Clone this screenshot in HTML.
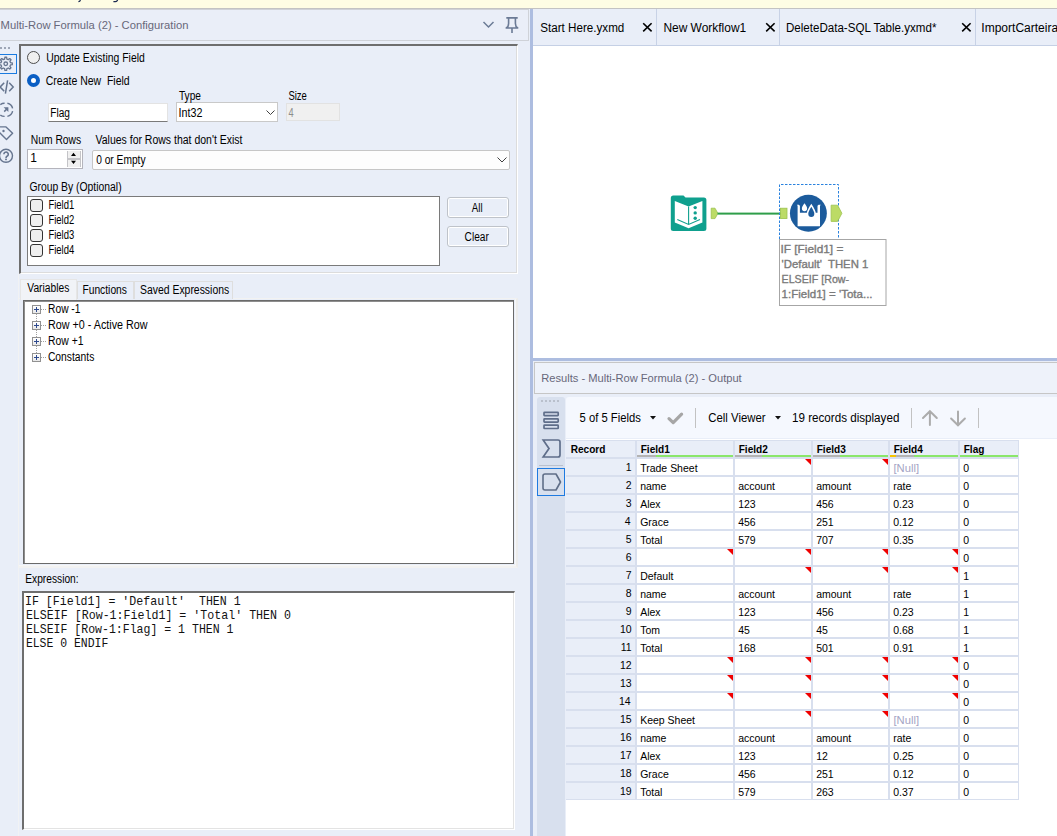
<!DOCTYPE html>
<html><head><meta charset="utf-8">
<style>
*{margin:0;padding:0;box-sizing:border-box}
html,body{width:1057px;height:836px;overflow:hidden;background:#e9eef8;font-family:"Liberation Sans",sans-serif;color:#000}
.a{position:absolute}
.t{position:absolute;white-space:nowrap;font-size:11px;line-height:13px}
svg{position:absolute;overflow:visible}
.tb{font-weight:bold;font-size:11px;line-height:14px}
.td{font-size:11.5px;line-height:14px}
.nul{color:#a3a3c0}
</style></head><body>
<!-- top yellow bar -->
<div class="a" style="left:0;top:0;width:1057px;height:8px;background:#fefde4"></div>
<div class="a" style="left:0;top:8px;width:1057px;height:1px;background:#c3c3c3"></div>
<svg style="left:0;top:0" width="200" height="8"><path d="M80.6 -1 Q80.4 1.6 78.4 1.6" fill="none" stroke="#1a2a50" stroke-width="1.2"/><path d="M117.6 -1 Q117.6 1.6 115.4 1.6 H113.4" fill="none" stroke="#1a2a50" stroke-width="1.2"/></svg>

<!-- LEFT CONFIG PANEL -->
<div class="a" style="left:0;top:9px;width:530px;height:827px;background:#e9eef8"></div>
<!-- header -->
<div class="a" style="left:-1px;top:9px;width:530px;height:32px;border:1px solid #cfd2d8;background:#eaeef8"></div>

<svg style="left:483px;top:21px" width="11" height="8"><path d="M0.5 1 L5.5 6 L10.5 1" fill="none" stroke="#6b7a95" stroke-width="1.5"/></svg>
<svg style="left:0;top:0" width="530" height="40"><path d="M506.3 17.9 H517.7 M508.6 18.2 V23.5 Q508.6 26.6 506.3 28 H517.7 Q515.4 26.6 515.4 23.5 V18.2 M512 28 V33" fill="none" stroke="#6b7a95" stroke-width="1.6" stroke-linejoin="round"/></svg>


<!-- left icon strip -->
<svg style="left:0;top:0" width="40" height="180">
  <g fill="#9ea6b6"><rect x="0" y="47" width="2" height="2"/><rect x="4" y="47" width="2" height="2"/><rect x="8" y="47" width="2" height="2"/></g>
  <rect x="-0.5" y="54.5" width="17" height="19" fill="none" stroke="#1a7be0" stroke-width="1"/>
  <path d="M10.51 62.66 L12.29 62.92 L12.29 64.68 L10.51 64.94 L9.93 66.36 L11.00 67.80 L9.75 69.05 L8.31 67.98 L6.89 68.56 L6.63 70.34 L4.87 70.34 L4.61 68.56 L3.19 67.98 L1.75 69.05 L0.50 67.80 L1.57 66.36 L0.99 64.94 L-0.79 64.68 L-0.79 62.92 L0.99 62.66 L1.57 61.24 L0.50 59.80 L1.75 58.55 L3.19 59.62 L4.61 59.04 L4.87 57.26 L6.63 57.26 L6.89 59.04 L8.31 59.62 L9.75 58.55 L11.00 59.80 L9.93 61.24 Z" fill="none" stroke="#66758f" stroke-width="1.3" stroke-linejoin="round"/>
  <circle cx="5.75" cy="63.8" r="1.8" fill="none" stroke="#66758f" stroke-width="1.3"/>
  <path d="M4.2 82.8 L0.2 87 L4.2 91.2 M9.2 82.8 L13.2 87 L9.2 91.2 M7.6 80.4 L5.4 93.6" fill="none" stroke="#66758f" stroke-width="1.5"/>
  <path d="M0.3 104.6 A6.6 6.6 0 0 1 4.6 103.2 M7.4 103.2 A6.6 6.6 0 0 1 12.6 108.4 M12.6 111.2 A6.6 6.6 0 0 1 7.4 116.4 M4.6 116.4 A6.6 6.6 0 0 1 0.3 115" fill="none" stroke="#66758f" stroke-width="1.4"/>
  <path d="M4.2 111.6 L7.6 108.2" stroke="#66758f" stroke-width="1.5"/>
  <path d="M3.6 107.2 H8.4 V112 Z" fill="#66758f"/>
  <path d="M-1 126.9 H6 L12.6 133.3 L6.5 139.4 L-1 132" fill="none" stroke="#66758f" stroke-width="1.4" stroke-linejoin="round"/>
  <circle cx="3.5" cy="131" r="1.2" fill="#66758f"/>
  <circle cx="6" cy="155.8" r="6.5" fill="none" stroke="#66758f" stroke-width="1.4"/>
  <path d="M3.9 154.2 A2.2 2.2 0 1 1 7.6 155.8 Q6 156.6 6 158" fill="none" stroke="#66758f" stroke-width="1.6"/>
  <rect x="5.1" y="158.6" width="1.8" height="1.6" fill="#66758f"/>
</svg>
<!-- config groupbox -->
<div class="a" style="left:19px;top:44px;width:499px;height:230px;border-top:2px solid #6e6e6e;border-left:2px solid #6e6e6e;border-right:1px solid #fff;border-bottom:1px solid #fff"></div>
<div class="a" style="left:21px;top:46px;width:496px;height:227px;border-right:1px solid #dcdcdc;border-bottom:1px solid #dcdcdc"></div>

<!-- radios -->
<div class="a" style="left:27px;top:51px;width:13px;height:13px;border-radius:50%;border:1px solid #4d4d4d;background:#f0f0f0"></div>

<div class="a" style="left:27px;top:74px;width:13px;height:13px;border-radius:50%;border:4px solid #0a5ec4;background:#fff"></div>


<!-- field row -->


<div class="a" style="left:48px;top:103px;width:120px;height:19px;background:#fff;border:1px solid #e3e3e3;border-bottom:1px solid #7a7a7a"></div>

<div class="a" style="left:176px;top:102px;width:102px;height:20px;background:#fff;border:1px solid #c9c9c9"></div>

<svg style="left:266px;top:110px" width="9" height="6"><path d="M0.5 0.5 L4.5 4.5 L8.5 0.5" fill="none" stroke="#404040" stroke-width="1"/></svg>
<div class="a" style="left:286px;top:103px;width:54px;height:18px;background:#f0f0f0;border:1px solid #e2e2e2"></div>


<!-- num rows -->


<div class="a" style="left:27px;top:149px;width:56px;height:20px;background:#fff;border:1px solid #b4b4bc"></div>

<div class="a" style="left:67px;top:151px;width:14px;height:16px;background:#c4c4c8"></div><div class="a" style="left:68px;top:151px;width:12px;height:7px;background:#f0f0f0"></div><div class="a" style="left:68px;top:160px;width:12px;height:7px;background:#f0f0f0"></div>
<svg style="left:0;top:0" width="100" height="200"><path d="M71 156 L73.5 152.8 L76 156 Z M71 160.8 H76 L73.5 164 Z" fill="#000"/></svg>
<div class="a" style="left:92px;top:150px;width:418px;height:20px;background:#fdfdfd;border:1px solid #c6c6c6;border-radius:2px"></div>

<svg style="left:497px;top:157px" width="10" height="6"><path d="M0.5 0.5 L5 5 L9.5 0.5" fill="none" stroke="#404040" stroke-width="1"/></svg>

<!-- group by -->

<div class="a" style="left:27px;top:196px;width:413px;height:70px;background:#fff;border:1px solid #7a7a7a"></div>
<div class="a" style="left:30px;top:199px;width:13px;height:13px;border:1px solid #333;border-radius:3px;background:#efefef"></div>
<div class="a" style="left:30px;top:214px;width:13px;height:13px;border:1px solid #333;border-radius:3px;background:#efefef"></div>
<div class="a" style="left:30px;top:229px;width:13px;height:13px;border:1px solid #333;border-radius:3px;background:#efefef"></div>
<div class="a" style="left:30px;top:244px;width:13px;height:13px;border:1px solid #333;border-radius:3px;background:#efefef"></div>




<div class="a" style="left:447px;top:197px;width:62px;height:21px;background:#e9eef8;border:1px solid #bfc3ca;border-radius:3px;box-shadow:inset 0 0 0 1px #fff"></div>

<div class="a" style="left:447px;top:226px;width:62px;height:21px;background:#e9eef8;border:1px solid #bfc3ca;border-radius:3px;box-shadow:inset 0 0 0 1px #fff"></div>


<!-- tab control -->
<div class="a" style="left:18px;top:298px;width:500px;height:270px;border:1px solid #f2f2f2;border-right:2px solid #ececec;border-bottom:2px solid #f2f2f2;box-shadow:inset -1px -1px 0 #f6f6f6;background:#e9eef8"></div>
<div class="a" style="left:18px;top:567px;width:1px;height:269px;background:#f1f2f4"></div>
<div class="a" style="left:20px;top:279px;width:57px;height:21px;background:#f1f3f7;border:1px solid #e6e6e6;border-bottom:none"></div>

<div class="a" style="left:77px;top:281px;width:57px;height:18px;background:#e9eef8;border:1px solid #dedede;border-bottom:none"></div>

<div class="a" style="left:134px;top:281px;width:99px;height:18px;background:#e9eef8;border:1px solid #dedede;border-bottom:none"></div>


<div class="a" style="left:18px;top:274px;width:1px;height:24px;background:#f1f2f4"></div>
<!-- tree -->
<div class="a" style="left:23px;top:300px;width:491px;height:264px;background:#fff;border:1px solid #6a6a6a;box-shadow:inset 1px 1px 0 #8e8e8e"></div>
<div class="a" style="left:32px;top:305px;width:9px;height:9px;border:1px solid #919191;background:linear-gradient(#fff,#e8e8e8)"></div><svg style="left:33px;top:306px" width="7" height="7"><path d="M1 3.5 H6 M3.5 1 V6" stroke="#2e4a8e" stroke-width="1"/></svg><svg style="left:41px;top:309px" width="6" height="1"><path d="M0 0.5 H1 M2 0.5 H3 M4 0.5 H5" stroke="#a0a0a0" stroke-width="1"/></svg><svg style="left:36px;top:314px" width="1" height="7"><path d="M0.5 0 V1 M0.5 2 V3 M0.5 4 V5 M0.5 6 V7" stroke="#a0a0a0" stroke-width="1"/></svg><div class="a" style="left:32px;top:321px;width:9px;height:9px;border:1px solid #919191;background:linear-gradient(#fff,#e8e8e8)"></div><svg style="left:33px;top:322px" width="7" height="7"><path d="M1 3.5 H6 M3.5 1 V6" stroke="#2e4a8e" stroke-width="1"/></svg><svg style="left:41px;top:325px" width="6" height="1"><path d="M0 0.5 H1 M2 0.5 H3 M4 0.5 H5" stroke="#a0a0a0" stroke-width="1"/></svg><svg style="left:36px;top:330px" width="1" height="7"><path d="M0.5 0 V1 M0.5 2 V3 M0.5 4 V5 M0.5 6 V7" stroke="#a0a0a0" stroke-width="1"/></svg><div class="a" style="left:32px;top:337px;width:9px;height:9px;border:1px solid #919191;background:linear-gradient(#fff,#e8e8e8)"></div><svg style="left:33px;top:338px" width="7" height="7"><path d="M1 3.5 H6 M3.5 1 V6" stroke="#2e4a8e" stroke-width="1"/></svg><svg style="left:41px;top:341px" width="6" height="1"><path d="M0 0.5 H1 M2 0.5 H3 M4 0.5 H5" stroke="#a0a0a0" stroke-width="1"/></svg><svg style="left:36px;top:346px" width="1" height="7"><path d="M0.5 0 V1 M0.5 2 V3 M0.5 4 V5 M0.5 6 V7" stroke="#a0a0a0" stroke-width="1"/></svg><div class="a" style="left:32px;top:353px;width:9px;height:9px;border:1px solid #919191;background:linear-gradient(#fff,#e8e8e8)"></div><svg style="left:33px;top:354px" width="7" height="7"><path d="M1 3.5 H6 M3.5 1 V6" stroke="#2e4a8e" stroke-width="1"/></svg><svg style="left:41px;top:357px" width="6" height="1"><path d="M0 0.5 H1 M2 0.5 H3 M4 0.5 H5" stroke="#a0a0a0" stroke-width="1"/></svg>

<!-- expression -->

<div class="a" style="left:22px;top:591px;width:493px;height:239px;background:#fff;border-top:2px solid #6e6e6e;border-left:2px solid #6e6e6e;border-right:1px solid #fff;border-bottom:1px solid #fff"></div><div class="a" style="left:24px;top:593px;width:490px;height:236px;border-right:1px solid #e3e3e3;border-bottom:1px solid #e3e3e3"></div>



<!-- RIGHT: doc tabs -->
<div class="a" style="left:533px;top:9px;width:524px;height:37px;background:#e9eef8;border-bottom:1px solid #c5d0e5"></div>

<svg style="left:642px;top:22px" width="11" height="11"><path d="M1.2 1.2 L9.6 9.4 M9.6 1.2 L1.2 9.4" stroke="#000" stroke-width="1.6"/></svg>
<div class="a" style="left:656px;top:9px;width:1px;height:36px;background:#c8d2e6"></div>

<svg style="left:765px;top:22px" width="11" height="11"><path d="M1.2 1.2 L9.6 9.4 M9.6 1.2 L1.2 9.4" stroke="#000" stroke-width="1.6"/></svg>
<div class="a" style="left:779px;top:9px;width:1px;height:36px;background:#c8d2e6"></div>

<svg style="left:961px;top:22px" width="11" height="11"><path d="M1.2 1.2 L9.6 9.4 M9.6 1.2 L1.2 9.4" stroke="#000" stroke-width="1.6"/></svg>
<div class="a" style="left:975px;top:9px;width:1px;height:36px;background:#c8d2e6"></div>


<!-- canvas -->
<div class="a" style="left:533px;top:46px;width:524px;height:312px;background:#fff"></div>
<!-- input tool -->
<svg style="left:0;top:0" width="1057" height="836">
  <path d="M670.8 198 Q670.8 195.5 673.3 195.5 H683.5 L685.5 197.4 H703.9 Q706.4 197.4 706.4 199.9 V228.5 Q706.4 231 703.9 231 H673.3 Q670.8 231 670.8 228.5 Z" fill="#0fa08e"/>
  <path d="M674.8 201 L688.6 206.6 L702.4 201 V222.6 L688.6 228.2 L674.8 222.6 Z" fill="#fff"/>
  <path d="M677.3 219.6 L688.6 224.4 L700 219.6 M688.6 206.6 V224.4" fill="none" stroke="#0fa08e" stroke-width="1.1"/>
  <circle cx="695.2" cy="207.6" r="1.7" fill="#0fa08e"/><circle cx="695.2" cy="212.9" r="1.7" fill="#0fa08e"/><circle cx="695.2" cy="218.3" r="1.7" fill="#0fa08e"/>
  <path d="M711.2 208.2 H715 L717.9 213.4 L715 218.6 H711.2 Z" fill="#bcdb66" stroke="#9cc24e" stroke-width="0.8"/>
  <rect x="717.5" y="212.6" width="65" height="2" fill="#2f9e4a"/>
  <rect x="780.4" y="208.2" width="6.6" height="10.4" fill="#bcdb66" stroke="#9cc24e" stroke-width="0.8"/>
  <path d="M779.5 239 V184.5 H838.5 V239" fill="none" stroke="#2a82de" stroke-width="1" stroke-dasharray="2.5 1.5"/>
  <circle cx="808.4" cy="213.3" r="18.45" fill="#1c5b9c"/>
  <path d="M796.8 204.8 L797.6 205.8 V226.3 H820 V205.8 L820.8 204.8 L818.6 204.8 L817.5 205.8 V212.7 H799.9 V205.8 L798.8 204.8 Z" fill="#fff"/>
  <path d="M804.5 203.2 Q801.6 207.2 801.9 208.6 A2.6 2.6 0 0 0 807.1 208.6 Q807.4 207.2 804.5 203.2 Z" fill="#fff"/>
  <path d="M811.3 203.8 Q806.2 211.5 806.8 214 A4.5 4.5 0 0 0 815.8 214 Q816.4 211.5 811.3 203.8 Z" fill="#fff"/>
  <path d="M811.3 206.8 Q808 212.2 808.3 214 A3 3 0 0 0 814.3 214 Q814.6 212.2 811.3 206.8 Z" fill="#1c5b9c"/>
  <path d="M831.1 205.2 H837.6 L841.9 213.3 L837.6 221.4 H831.1 Z" fill="#bcdb66" stroke="#9cc24e" stroke-width="0.8"/>
  <rect x="779.5" y="239.5" width="106.5" height="66" fill="#fff" stroke="#a6a6a6" stroke-width="1"/>
</svg>
<!-- results separator -->
<div class="a" style="left:533px;top:358px;width:524px;height:3px;background:#adbde0"></div>
<div class="a" style="left:533px;top:361px;width:524px;height:475px;background:#e9eef8"></div>
<div class="a" style="left:534px;top:362px;width:530px;height:32px;background:#eef2fa;border:1px solid #c6c6c6"></div>


<!-- side strip -->
<div class="a" style="left:537px;top:397px;width:28px;height:439px;background:#d8e0ee;border-radius:3px 3px 0 0"></div>
<svg style="left:541px;top:400px" width="20" height="3"><g fill="#b9c0cc"><rect x="0" y="0" width="2" height="2"/><rect x="4" y="0" width="2" height="2"/><rect x="8" y="0" width="2" height="2"/><rect x="12" y="0" width="2" height="2"/><rect x="16" y="0" width="2" height="2"/></g></svg>
<svg style="left:0;top:0" width="600" height="500"><g fill="none" stroke="#5f6e8a" stroke-width="1.7"><rect x="544" y="412.4" width="14.2" height="3.3" rx="0.6"/><rect x="544" y="418.9" width="14.2" height="3.2" rx="0.6"/><rect x="544" y="425.2" width="14.2" height="3.3" rx="0.6"/></g></svg>
<svg style="left:0;top:0" width="600" height="500"><path d="M543.2 440 H558 Q560 440 560 442 V455 Q560 457 558 457 H543.2 L549 448.5 Z" fill="none" stroke="#5f6e8a" stroke-width="1.7" stroke-linejoin="miter"/></svg>
<div class="a" style="left:539px;top:465px;width:24px;height:1px;background:#b9c1cf"></div>
<div class="a" style="left:537px;top:468px;width:28px;height:28px;border:1px solid #1e7ae0"></div>
<svg style="left:542px;top:473px" width="20" height="18"><path d="M3 1 H14 L18.5 9 L14 17 H3 Q1 17 1 15 V3 Q1 1 3 1 Z" fill="none" stroke="#5f6e88" stroke-width="1.6" stroke-linejoin="round"/></svg>

<!-- toolbar -->
<div class="a" style="left:566px;top:397px;width:491px;height:41px;background:#f5f8fe;border-radius:3px 0 0 0"></div>

<svg style="left:650px;top:416px" width="6" height="4"><path d="M0 0 H6 L3 3.5 Z" fill="#111"/></svg>
<svg style="left:0;top:0" width="700" height="440"><path d="M669 418.6 L673.2 422.6 L681.6 414.2" fill="none" stroke="#a6a6a6" stroke-width="3.2" stroke-linecap="round" stroke-linejoin="round"/></svg>
<div class="a" style="left:695px;top:408px;width:1px;height:20px;background:#c2c2c2"></div>

<svg style="left:775px;top:416px" width="6" height="4"><path d="M0 0 H6 L3 3.5 Z" fill="#111"/></svg>

<div class="a" style="left:911px;top:408px;width:1px;height:20px;background:#c2c2c2"></div>
<svg style="left:0;top:0" width="1057" height="836"><path d="M929.9 425 V411.5 M923 418 L929.9 411.2 L936.8 418 M958 411.5 V425 M951.1 418.5 L958 425.3 L964.9 418.5" fill="none" stroke="#acacac" stroke-width="2" stroke-linecap="round"/></svg>

<div class="a" style="left:978px;top:408px;width:1px;height:20px;background:#c2c2c2"></div>

<!-- table area -->
<div class="a" style="left:566px;top:439px;width:491px;height:397px;background:#fff"></div>
<div class="a" style="left:566px;top:440px;width:453px;height:360px;background:#d8dfee"></div>
<div class="a" style="left:566px;top:441px;width:69px;height:14px;background:#e9eef8"></div>

<div class="a" style="left:637px;top:441px;width:96px;height:14px;background:#e9eef8"></div>

<div class="a" style="left:735px;top:441px;width:76px;height:14px;background:#e9eef8"></div>

<div class="a" style="left:813px;top:441px;width:75px;height:14px;background:#e9eef8"></div>

<div class="a" style="left:890px;top:441px;width:68px;height:14px;background:#e9eef8"></div>

<div class="a" style="left:960px;top:441px;width:58px;height:14px;background:#e9eef8"></div>

<div class="a" style="left:566px;top:455px;width:69px;height:2px;background:#e9eef8"></div>
<div class="a" style="left:637px;top:455px;width:19px;height:2px;background:#b3b3b3"></div>
<div class="a" style="left:656px;top:455px;width:77px;height:2px;background:#8ae66a"></div>
<div class="a" style="left:735px;top:455px;width:27px;height:2px;background:#b3b3b3"></div>
<div class="a" style="left:762px;top:455px;width:49px;height:2px;background:#8ae66a"></div>
<div class="a" style="left:813px;top:455px;width:27px;height:2px;background:#b3b3b3"></div>
<div class="a" style="left:840px;top:455px;width:48px;height:2px;background:#8ae66a"></div>
<div class="a" style="left:890px;top:455px;width:6px;height:2px;background:#f5c400"></div>
<div class="a" style="left:896px;top:455px;width:18px;height:2px;background:#b3b3b3"></div>
<div class="a" style="left:914px;top:455px;width:44px;height:2px;background:#8ae66a"></div>
<div class="a" style="left:960px;top:455px;width:58px;height:2px;background:#8ae66a"></div>
<div class="a" style="left:566px;top:459px;width:69px;height:16px;background:#e9eef8"></div>

<div class="a" style="left:637px;top:459px;width:96px;height:16px;background:#fff"></div>

<div class="a" style="left:735px;top:459px;width:76px;height:16px;background:#fff"></div>
<svg style="left:805px;top:459px" width="6" height="6"><path d="M0 0 H6 V6 Z" fill="#f00000"/></svg>
<div class="a" style="left:813px;top:459px;width:75px;height:16px;background:#fff"></div>
<svg style="left:882px;top:459px" width="6" height="6"><path d="M0 0 H6 V6 Z" fill="#f00000"/></svg>
<div class="a" style="left:890px;top:459px;width:68px;height:16px;background:#fff"></div>

<div class="a" style="left:960px;top:459px;width:58px;height:16px;background:#fff"></div>

<div class="a" style="left:566px;top:477px;width:69px;height:16px;background:#e9eef8"></div>

<div class="a" style="left:637px;top:477px;width:96px;height:16px;background:#fff"></div>

<div class="a" style="left:735px;top:477px;width:76px;height:16px;background:#fff"></div>

<div class="a" style="left:813px;top:477px;width:75px;height:16px;background:#fff"></div>

<div class="a" style="left:890px;top:477px;width:68px;height:16px;background:#fff"></div>

<div class="a" style="left:960px;top:477px;width:58px;height:16px;background:#fff"></div>

<div class="a" style="left:566px;top:495px;width:69px;height:16px;background:#e9eef8"></div>

<div class="a" style="left:637px;top:495px;width:96px;height:16px;background:#fff"></div>

<div class="a" style="left:735px;top:495px;width:76px;height:16px;background:#fff"></div>

<div class="a" style="left:813px;top:495px;width:75px;height:16px;background:#fff"></div>

<div class="a" style="left:890px;top:495px;width:68px;height:16px;background:#fff"></div>

<div class="a" style="left:960px;top:495px;width:58px;height:16px;background:#fff"></div>

<div class="a" style="left:566px;top:513px;width:69px;height:16px;background:#e9eef8"></div>

<div class="a" style="left:637px;top:513px;width:96px;height:16px;background:#fff"></div>

<div class="a" style="left:735px;top:513px;width:76px;height:16px;background:#fff"></div>

<div class="a" style="left:813px;top:513px;width:75px;height:16px;background:#fff"></div>

<div class="a" style="left:890px;top:513px;width:68px;height:16px;background:#fff"></div>

<div class="a" style="left:960px;top:513px;width:58px;height:16px;background:#fff"></div>

<div class="a" style="left:566px;top:531px;width:69px;height:16px;background:#e9eef8"></div>

<div class="a" style="left:637px;top:531px;width:96px;height:16px;background:#fff"></div>

<div class="a" style="left:735px;top:531px;width:76px;height:16px;background:#fff"></div>

<div class="a" style="left:813px;top:531px;width:75px;height:16px;background:#fff"></div>

<div class="a" style="left:890px;top:531px;width:68px;height:16px;background:#fff"></div>

<div class="a" style="left:960px;top:531px;width:58px;height:16px;background:#fff"></div>

<div class="a" style="left:566px;top:549px;width:69px;height:16px;background:#e9eef8"></div>

<div class="a" style="left:637px;top:549px;width:96px;height:16px;background:#fff"></div>
<svg style="left:727px;top:549px" width="6" height="6"><path d="M0 0 H6 V6 Z" fill="#f00000"/></svg>
<div class="a" style="left:735px;top:549px;width:76px;height:16px;background:#fff"></div>
<svg style="left:805px;top:549px" width="6" height="6"><path d="M0 0 H6 V6 Z" fill="#f00000"/></svg>
<div class="a" style="left:813px;top:549px;width:75px;height:16px;background:#fff"></div>
<svg style="left:882px;top:549px" width="6" height="6"><path d="M0 0 H6 V6 Z" fill="#f00000"/></svg>
<div class="a" style="left:890px;top:549px;width:68px;height:16px;background:#fff"></div>
<svg style="left:952px;top:549px" width="6" height="6"><path d="M0 0 H6 V6 Z" fill="#f00000"/></svg>
<div class="a" style="left:960px;top:549px;width:58px;height:16px;background:#fff"></div>

<div class="a" style="left:566px;top:567px;width:69px;height:16px;background:#e9eef8"></div>

<div class="a" style="left:637px;top:567px;width:96px;height:16px;background:#fff"></div>

<div class="a" style="left:735px;top:567px;width:76px;height:16px;background:#fff"></div>
<svg style="left:805px;top:567px" width="6" height="6"><path d="M0 0 H6 V6 Z" fill="#f00000"/></svg>
<div class="a" style="left:813px;top:567px;width:75px;height:16px;background:#fff"></div>
<svg style="left:882px;top:567px" width="6" height="6"><path d="M0 0 H6 V6 Z" fill="#f00000"/></svg>
<div class="a" style="left:890px;top:567px;width:68px;height:16px;background:#fff"></div>
<svg style="left:952px;top:567px" width="6" height="6"><path d="M0 0 H6 V6 Z" fill="#f00000"/></svg>
<div class="a" style="left:960px;top:567px;width:58px;height:16px;background:#fff"></div>

<div class="a" style="left:566px;top:585px;width:69px;height:16px;background:#e9eef8"></div>

<div class="a" style="left:637px;top:585px;width:96px;height:16px;background:#fff"></div>

<div class="a" style="left:735px;top:585px;width:76px;height:16px;background:#fff"></div>

<div class="a" style="left:813px;top:585px;width:75px;height:16px;background:#fff"></div>

<div class="a" style="left:890px;top:585px;width:68px;height:16px;background:#fff"></div>

<div class="a" style="left:960px;top:585px;width:58px;height:16px;background:#fff"></div>

<div class="a" style="left:566px;top:603px;width:69px;height:16px;background:#e9eef8"></div>

<div class="a" style="left:637px;top:603px;width:96px;height:16px;background:#fff"></div>

<div class="a" style="left:735px;top:603px;width:76px;height:16px;background:#fff"></div>

<div class="a" style="left:813px;top:603px;width:75px;height:16px;background:#fff"></div>

<div class="a" style="left:890px;top:603px;width:68px;height:16px;background:#fff"></div>

<div class="a" style="left:960px;top:603px;width:58px;height:16px;background:#fff"></div>

<div class="a" style="left:566px;top:621px;width:69px;height:16px;background:#e9eef8"></div>

<div class="a" style="left:637px;top:621px;width:96px;height:16px;background:#fff"></div>

<div class="a" style="left:735px;top:621px;width:76px;height:16px;background:#fff"></div>

<div class="a" style="left:813px;top:621px;width:75px;height:16px;background:#fff"></div>

<div class="a" style="left:890px;top:621px;width:68px;height:16px;background:#fff"></div>

<div class="a" style="left:960px;top:621px;width:58px;height:16px;background:#fff"></div>

<div class="a" style="left:566px;top:639px;width:69px;height:16px;background:#e9eef8"></div>

<div class="a" style="left:637px;top:639px;width:96px;height:16px;background:#fff"></div>

<div class="a" style="left:735px;top:639px;width:76px;height:16px;background:#fff"></div>

<div class="a" style="left:813px;top:639px;width:75px;height:16px;background:#fff"></div>

<div class="a" style="left:890px;top:639px;width:68px;height:16px;background:#fff"></div>

<div class="a" style="left:960px;top:639px;width:58px;height:16px;background:#fff"></div>

<div class="a" style="left:566px;top:657px;width:69px;height:16px;background:#e9eef8"></div>

<div class="a" style="left:637px;top:657px;width:96px;height:16px;background:#fff"></div>
<svg style="left:727px;top:657px" width="6" height="6"><path d="M0 0 H6 V6 Z" fill="#f00000"/></svg>
<div class="a" style="left:735px;top:657px;width:76px;height:16px;background:#fff"></div>
<svg style="left:805px;top:657px" width="6" height="6"><path d="M0 0 H6 V6 Z" fill="#f00000"/></svg>
<div class="a" style="left:813px;top:657px;width:75px;height:16px;background:#fff"></div>
<svg style="left:882px;top:657px" width="6" height="6"><path d="M0 0 H6 V6 Z" fill="#f00000"/></svg>
<div class="a" style="left:890px;top:657px;width:68px;height:16px;background:#fff"></div>
<svg style="left:952px;top:657px" width="6" height="6"><path d="M0 0 H6 V6 Z" fill="#f00000"/></svg>
<div class="a" style="left:960px;top:657px;width:58px;height:16px;background:#fff"></div>

<div class="a" style="left:566px;top:675px;width:69px;height:16px;background:#e9eef8"></div>

<div class="a" style="left:637px;top:675px;width:96px;height:16px;background:#fff"></div>
<svg style="left:727px;top:675px" width="6" height="6"><path d="M0 0 H6 V6 Z" fill="#f00000"/></svg>
<div class="a" style="left:735px;top:675px;width:76px;height:16px;background:#fff"></div>
<svg style="left:805px;top:675px" width="6" height="6"><path d="M0 0 H6 V6 Z" fill="#f00000"/></svg>
<div class="a" style="left:813px;top:675px;width:75px;height:16px;background:#fff"></div>
<svg style="left:882px;top:675px" width="6" height="6"><path d="M0 0 H6 V6 Z" fill="#f00000"/></svg>
<div class="a" style="left:890px;top:675px;width:68px;height:16px;background:#fff"></div>
<svg style="left:952px;top:675px" width="6" height="6"><path d="M0 0 H6 V6 Z" fill="#f00000"/></svg>
<div class="a" style="left:960px;top:675px;width:58px;height:16px;background:#fff"></div>

<div class="a" style="left:566px;top:693px;width:69px;height:16px;background:#e9eef8"></div>

<div class="a" style="left:637px;top:693px;width:96px;height:16px;background:#fff"></div>
<svg style="left:727px;top:693px" width="6" height="6"><path d="M0 0 H6 V6 Z" fill="#f00000"/></svg>
<div class="a" style="left:735px;top:693px;width:76px;height:16px;background:#fff"></div>
<svg style="left:805px;top:693px" width="6" height="6"><path d="M0 0 H6 V6 Z" fill="#f00000"/></svg>
<div class="a" style="left:813px;top:693px;width:75px;height:16px;background:#fff"></div>
<svg style="left:882px;top:693px" width="6" height="6"><path d="M0 0 H6 V6 Z" fill="#f00000"/></svg>
<div class="a" style="left:890px;top:693px;width:68px;height:16px;background:#fff"></div>
<svg style="left:952px;top:693px" width="6" height="6"><path d="M0 0 H6 V6 Z" fill="#f00000"/></svg>
<div class="a" style="left:960px;top:693px;width:58px;height:16px;background:#fff"></div>

<div class="a" style="left:566px;top:711px;width:69px;height:16px;background:#e9eef8"></div>

<div class="a" style="left:637px;top:711px;width:96px;height:16px;background:#fff"></div>

<div class="a" style="left:735px;top:711px;width:76px;height:16px;background:#fff"></div>
<svg style="left:805px;top:711px" width="6" height="6"><path d="M0 0 H6 V6 Z" fill="#f00000"/></svg>
<div class="a" style="left:813px;top:711px;width:75px;height:16px;background:#fff"></div>
<svg style="left:882px;top:711px" width="6" height="6"><path d="M0 0 H6 V6 Z" fill="#f00000"/></svg>
<div class="a" style="left:890px;top:711px;width:68px;height:16px;background:#fff"></div>

<div class="a" style="left:960px;top:711px;width:58px;height:16px;background:#fff"></div>

<div class="a" style="left:566px;top:729px;width:69px;height:16px;background:#e9eef8"></div>

<div class="a" style="left:637px;top:729px;width:96px;height:16px;background:#fff"></div>

<div class="a" style="left:735px;top:729px;width:76px;height:16px;background:#fff"></div>

<div class="a" style="left:813px;top:729px;width:75px;height:16px;background:#fff"></div>

<div class="a" style="left:890px;top:729px;width:68px;height:16px;background:#fff"></div>

<div class="a" style="left:960px;top:729px;width:58px;height:16px;background:#fff"></div>

<div class="a" style="left:566px;top:747px;width:69px;height:16px;background:#e9eef8"></div>

<div class="a" style="left:637px;top:747px;width:96px;height:16px;background:#fff"></div>

<div class="a" style="left:735px;top:747px;width:76px;height:16px;background:#fff"></div>

<div class="a" style="left:813px;top:747px;width:75px;height:16px;background:#fff"></div>

<div class="a" style="left:890px;top:747px;width:68px;height:16px;background:#fff"></div>

<div class="a" style="left:960px;top:747px;width:58px;height:16px;background:#fff"></div>

<div class="a" style="left:566px;top:765px;width:69px;height:16px;background:#e9eef8"></div>

<div class="a" style="left:637px;top:765px;width:96px;height:16px;background:#fff"></div>

<div class="a" style="left:735px;top:765px;width:76px;height:16px;background:#fff"></div>

<div class="a" style="left:813px;top:765px;width:75px;height:16px;background:#fff"></div>

<div class="a" style="left:890px;top:765px;width:68px;height:16px;background:#fff"></div>

<div class="a" style="left:960px;top:765px;width:58px;height:16px;background:#fff"></div>

<div class="a" style="left:566px;top:783px;width:69px;height:16px;background:#e9eef8"></div>

<div class="a" style="left:637px;top:783px;width:96px;height:16px;background:#fff"></div>

<div class="a" style="left:735px;top:783px;width:76px;height:16px;background:#fff"></div>

<div class="a" style="left:813px;top:783px;width:75px;height:16px;background:#fff"></div>

<div class="a" style="left:890px;top:783px;width:68px;height:16px;background:#fff"></div>

<div class="a" style="left:960px;top:783px;width:58px;height:16px;background:#fff"></div>


<!-- blue divider -->
<div class="a" style="left:530px;top:9px;width:3px;height:827px;background:#adbde0"></div>

<svg class="tx" width="1057" height="836" style="left:0;top:0"><text x="0.60" y="29" font-size="11.5" textLength="187.79" lengthAdjust="spacingAndGlyphs" fill="#68687a" font-weight="normal" font-family="Liberation Sans" xml:space="preserve">Multi-Row Formula (2) - Configuration</text>
<text x="46.30" y="62" font-size="12" textLength="98.49" lengthAdjust="spacingAndGlyphs" fill="#000" font-weight="normal" font-family="Liberation Sans" xml:space="preserve">Update Existing Field</text>
<text x="45.80" y="85" font-size="12" textLength="83.89" lengthAdjust="spacingAndGlyphs" fill="#000" font-weight="normal" font-family="Liberation Sans" xml:space="preserve">Create New  Field</text>
<text x="179.00" y="99.6" font-size="12" textLength="21.93" lengthAdjust="spacingAndGlyphs" fill="#000" font-weight="normal" font-family="Liberation Sans" xml:space="preserve">Type</text>
<text x="288.40" y="99.6" font-size="12" textLength="18.44" lengthAdjust="spacingAndGlyphs" fill="#000" font-weight="normal" font-family="Liberation Sans" xml:space="preserve">Size</text>
<text x="50.30" y="116.5" font-size="12" textLength="19.67" lengthAdjust="spacingAndGlyphs" fill="#000" font-weight="normal" font-family="Liberation Sans" xml:space="preserve">Flag</text>
<text x="178.50" y="116.7" font-size="12" textLength="23.90" lengthAdjust="spacingAndGlyphs" fill="#000" font-weight="normal" font-family="Liberation Sans" xml:space="preserve">Int32</text>
<text x="288.60" y="116.5" font-size="12" textLength="5.15" lengthAdjust="spacingAndGlyphs" fill="#8c8c8c" font-weight="normal" font-family="Liberation Sans" xml:space="preserve">4</text>
<text x="30.80" y="144" font-size="12" textLength="50.40" lengthAdjust="spacingAndGlyphs" fill="#000" font-weight="normal" font-family="Liberation Sans" xml:space="preserve">Num Rows</text>
<text x="95.50" y="144" font-size="12" textLength="147.02" lengthAdjust="spacingAndGlyphs" fill="#000" font-weight="normal" font-family="Liberation Sans" xml:space="preserve">Values for Rows that don't Exist</text>
<text x="30.30" y="162" font-size="12" textLength="6.67" lengthAdjust="spacingAndGlyphs" fill="#000" font-weight="normal" font-family="Liberation Sans" xml:space="preserve">1</text>
<text x="96.20" y="164" font-size="12" textLength="49.30" lengthAdjust="spacingAndGlyphs" fill="#000" font-weight="normal" font-family="Liberation Sans" xml:space="preserve">0 or Empty</text>
<text x="29.40" y="190.7" font-size="12" textLength="92.20" lengthAdjust="spacingAndGlyphs" fill="#000" font-weight="normal" font-family="Liberation Sans" xml:space="preserve">Group By (Optional)</text>
<text x="48.40" y="208.8" font-size="12" textLength="25.84" lengthAdjust="spacingAndGlyphs" fill="#000" font-weight="normal" font-family="Liberation Sans" xml:space="preserve">Field1</text>
<text x="48.40" y="223.8" font-size="12" textLength="25.84" lengthAdjust="spacingAndGlyphs" fill="#000" font-weight="normal" font-family="Liberation Sans" xml:space="preserve">Field2</text>
<text x="48.40" y="238.8" font-size="12" textLength="25.84" lengthAdjust="spacingAndGlyphs" fill="#000" font-weight="normal" font-family="Liberation Sans" xml:space="preserve">Field3</text>
<text x="48.40" y="253.8" font-size="12" textLength="25.84" lengthAdjust="spacingAndGlyphs" fill="#000" font-weight="normal" font-family="Liberation Sans" xml:space="preserve">Field4</text>
<text x="471.80" y="212" font-size="12" textLength="10.74" lengthAdjust="spacingAndGlyphs" fill="#000" font-weight="normal" font-family="Liberation Sans" xml:space="preserve">All</text>
<text x="464.60" y="240.8" font-size="12" textLength="24.20" lengthAdjust="spacingAndGlyphs" fill="#000" font-weight="normal" font-family="Liberation Sans" xml:space="preserve">Clear</text>
<text x="27.30" y="292" font-size="12" textLength="42.00" lengthAdjust="spacingAndGlyphs" fill="#000" font-weight="normal" font-family="Liberation Sans" xml:space="preserve">Variables</text>
<text x="82.40" y="294" font-size="12" textLength="44.60" lengthAdjust="spacingAndGlyphs" fill="#000" font-weight="normal" font-family="Liberation Sans" xml:space="preserve">Functions</text>
<text x="140.00" y="294" font-size="12" textLength="89.20" lengthAdjust="spacingAndGlyphs" fill="#000" font-weight="normal" font-family="Liberation Sans" xml:space="preserve">Saved Expressions</text>
<text x="48.10" y="312.8" font-size="12" textLength="32.32" lengthAdjust="spacingAndGlyphs" fill="#000" font-weight="normal" font-family="Liberation Sans" xml:space="preserve">Row -1</text>
<text x="48.10" y="328.9" font-size="12" textLength="99.40" lengthAdjust="spacingAndGlyphs" fill="#000" font-weight="normal" font-family="Liberation Sans" xml:space="preserve">Row +0 - Active Row</text>
<text x="48.10" y="344.7" font-size="12" textLength="35.42" lengthAdjust="spacingAndGlyphs" fill="#000" font-weight="normal" font-family="Liberation Sans" xml:space="preserve">Row +1</text>
<text x="47.90" y="360.6" font-size="12" textLength="46.40" lengthAdjust="spacingAndGlyphs" fill="#000" font-weight="normal" font-family="Liberation Sans" xml:space="preserve">Constants</text>
<text x="25.30" y="583.2" font-size="12" textLength="53.28" lengthAdjust="spacingAndGlyphs" fill="#000" font-weight="normal" font-family="Liberation Sans" xml:space="preserve">Expression:</text>
<text x="24.95" y="605.2" font-size="12.2" textLength="215.75" lengthAdjust="spacingAndGlyphs" fill="#111" font-weight="normal" font-family="Liberation Mono" xml:space="preserve">IF [Field1] = 'Default'  THEN 1</text>
<text x="25.90" y="619.1" font-size="12.2" textLength="265.10" lengthAdjust="spacingAndGlyphs" fill="#111" font-weight="normal" font-family="Liberation Mono" xml:space="preserve">ELSEIF [Row-1:Field1] = 'Total' THEN 0</text>
<text x="25.90" y="633.0" font-size="12.2" textLength="207.60" lengthAdjust="spacingAndGlyphs" fill="#111" font-weight="normal" font-family="Liberation Mono" xml:space="preserve">ELSEIF [Row-1:Flag] = 1 THEN 1</text>
<text x="25.90" y="646.9000000000001" font-size="12.2" textLength="82.39" lengthAdjust="spacingAndGlyphs" fill="#111" font-weight="normal" font-family="Liberation Mono" xml:space="preserve">ELSE 0 ENDIF</text>
<text x="540.20" y="32" font-size="12" textLength="84.15" lengthAdjust="spacingAndGlyphs" fill="#000" font-weight="normal" font-family="Liberation Sans" xml:space="preserve">Start Here.yxmd</text>
<text x="663.40" y="32" font-size="12" textLength="82.78" lengthAdjust="spacingAndGlyphs" fill="#000" font-weight="normal" font-family="Liberation Sans" xml:space="preserve">New Workflow1</text>
<text x="786.00" y="32" font-size="12" textLength="150.38" lengthAdjust="spacingAndGlyphs" fill="#000" font-weight="normal" font-family="Liberation Sans" xml:space="preserve">DeleteData-SQL Table.yxmd*</text>
<text x="981.30" y="32" font-size="12" textLength="76.88" lengthAdjust="spacingAndGlyphs" fill="#000" font-weight="normal" font-family="Liberation Sans" xml:space="preserve">ImportCarteira</text>
<text x="780.52" y="253" font-size="11" textLength="62.83" lengthAdjust="spacingAndGlyphs" fill="#7a7a7a" stroke="#7a7a7a" stroke-width="0.35" font-weight="normal" font-family="Liberation Sans" xml:space="preserve">IF [Field1] =</text>
<text x="781.60" y="268" font-size="11" textLength="86.72" lengthAdjust="spacingAndGlyphs" fill="#7a7a7a" stroke="#7a7a7a" stroke-width="0.35" font-weight="normal" font-family="Liberation Sans" xml:space="preserve">'Default'  THEN 1</text>
<text x="781.60" y="283" font-size="11" textLength="67.47" lengthAdjust="spacingAndGlyphs" fill="#7a7a7a" stroke="#7a7a7a" stroke-width="0.35" font-weight="normal" font-family="Liberation Sans" xml:space="preserve">ELSEIF [Row-</text>
<text x="781.60" y="298" font-size="11" textLength="90.96" lengthAdjust="spacingAndGlyphs" fill="#7a7a7a" stroke="#7a7a7a" stroke-width="0.35" font-weight="normal" font-family="Liberation Sans" xml:space="preserve">1:Field1] = 'Tota...</text>
<text x="541.20" y="382.2" font-size="11.5" textLength="200.52" lengthAdjust="spacingAndGlyphs" fill="#68687a" font-weight="normal" font-family="Liberation Sans" xml:space="preserve">Results - Multi-Row Formula (2) - Output</text>
<text x="579.60" y="422" font-size="12" textLength="61.20" lengthAdjust="spacingAndGlyphs" fill="#000" font-weight="normal" font-family="Liberation Sans" xml:space="preserve">5 of 5 Fields</text>
<text x="708.30" y="422" font-size="12" textLength="57.30" lengthAdjust="spacingAndGlyphs" fill="#000" font-weight="normal" font-family="Liberation Sans" xml:space="preserve">Cell Viewer</text>
<text x="792.00" y="422" font-size="12" textLength="107.35" lengthAdjust="spacingAndGlyphs" fill="#000" font-weight="normal" font-family="Liberation Sans" xml:space="preserve">19 records displayed</text>
<text x="570.70" y="453" font-size="11" textLength="34.76" lengthAdjust="spacingAndGlyphs" fill="#000" font-weight="bold" font-family="Liberation Sans" xml:space="preserve">Record</text>
<text x="640.70" y="453" font-size="11" textLength="29.15" lengthAdjust="spacingAndGlyphs" fill="#000" font-weight="bold" font-family="Liberation Sans" xml:space="preserve">Field1</text>
<text x="738.70" y="453" font-size="11" textLength="29.15" lengthAdjust="spacingAndGlyphs" fill="#000" font-weight="bold" font-family="Liberation Sans" xml:space="preserve">Field2</text>
<text x="816.70" y="453" font-size="11" textLength="29.15" lengthAdjust="spacingAndGlyphs" fill="#000" font-weight="bold" font-family="Liberation Sans" xml:space="preserve">Field3</text>
<text x="893.70" y="453" font-size="11" textLength="29.15" lengthAdjust="spacingAndGlyphs" fill="#000" font-weight="bold" font-family="Liberation Sans" xml:space="preserve">Field4</text>
<text x="963.70" y="453" font-size="11" textLength="20.74" lengthAdjust="spacingAndGlyphs" fill="#000" font-weight="bold" font-family="Liberation Sans" xml:space="preserve">Flag</text>
<text x="625.72" y="471.0" font-size="11.5" textLength="5.84" lengthAdjust="spacingAndGlyphs" fill="#000" font-weight="normal" font-family="Liberation Sans" transform="" >1</text>
<text x="640.20" y="471.8" font-size="11.5" textLength="57.37" lengthAdjust="spacingAndGlyphs" fill="#000" font-weight="normal" font-family="Liberation Sans" xml:space="preserve">Trade Sheet</text>
<text x="893.50" y="471.8" font-size="11.5" textLength="25.49" lengthAdjust="spacingAndGlyphs" fill="#a4a4c4" font-weight="normal" font-family="Liberation Sans" xml:space="preserve">[Null]</text>
<text x="963.20" y="471.8" font-size="11.5" textLength="5.84" lengthAdjust="spacingAndGlyphs" fill="#000" font-weight="normal" font-family="Liberation Sans" xml:space="preserve">0</text>
<text x="625.72" y="489.0" font-size="11.5" textLength="5.84" lengthAdjust="spacingAndGlyphs" fill="#000" font-weight="normal" font-family="Liberation Sans" transform="" >2</text>
<text x="640.20" y="489.8" font-size="11.5" textLength="26.25" lengthAdjust="spacingAndGlyphs" fill="#000" font-weight="normal" font-family="Liberation Sans" xml:space="preserve">name</text>
<text x="738.20" y="489.8" font-size="11.5" textLength="36.76" lengthAdjust="spacingAndGlyphs" fill="#000" font-weight="normal" font-family="Liberation Sans" xml:space="preserve">account</text>
<text x="816.20" y="489.8" font-size="11.5" textLength="35.00" lengthAdjust="spacingAndGlyphs" fill="#000" font-weight="normal" font-family="Liberation Sans" xml:space="preserve">amount</text>
<text x="893.20" y="489.8" font-size="11.5" textLength="18.08" lengthAdjust="spacingAndGlyphs" fill="#000" font-weight="normal" font-family="Liberation Sans" xml:space="preserve">rate</text>
<text x="963.20" y="489.8" font-size="11.5" textLength="5.84" lengthAdjust="spacingAndGlyphs" fill="#000" font-weight="normal" font-family="Liberation Sans" xml:space="preserve">0</text>
<text x="625.72" y="507.0" font-size="11.5" textLength="5.84" lengthAdjust="spacingAndGlyphs" fill="#000" font-weight="normal" font-family="Liberation Sans" transform="" >3</text>
<text x="640.20" y="507.8" font-size="11.5" textLength="20.41" lengthAdjust="spacingAndGlyphs" fill="#000" font-weight="normal" font-family="Liberation Sans" xml:space="preserve">Alex</text>
<text x="738.20" y="507.8" font-size="11.5" textLength="17.51" lengthAdjust="spacingAndGlyphs" fill="#000" font-weight="normal" font-family="Liberation Sans" xml:space="preserve">123</text>
<text x="816.20" y="507.8" font-size="11.5" textLength="17.51" lengthAdjust="spacingAndGlyphs" fill="#000" font-weight="normal" font-family="Liberation Sans" xml:space="preserve">456</text>
<text x="893.20" y="507.8" font-size="11.5" textLength="20.43" lengthAdjust="spacingAndGlyphs" fill="#000" font-weight="normal" font-family="Liberation Sans" xml:space="preserve">0.23</text>
<text x="963.20" y="507.8" font-size="11.5" textLength="5.84" lengthAdjust="spacingAndGlyphs" fill="#000" font-weight="normal" font-family="Liberation Sans" xml:space="preserve">0</text>
<text x="624.81" y="525.0" font-size="11.5" textLength="5.84" lengthAdjust="spacingAndGlyphs" fill="#000" font-weight="normal" font-family="Liberation Sans" transform="" >4</text>
<text x="640.20" y="525.8" font-size="11.5" textLength="28.58" lengthAdjust="spacingAndGlyphs" fill="#000" font-weight="normal" font-family="Liberation Sans" xml:space="preserve">Grace</text>
<text x="738.20" y="525.8" font-size="11.5" textLength="17.51" lengthAdjust="spacingAndGlyphs" fill="#000" font-weight="normal" font-family="Liberation Sans" xml:space="preserve">456</text>
<text x="816.20" y="525.8" font-size="11.5" textLength="17.51" lengthAdjust="spacingAndGlyphs" fill="#000" font-weight="normal" font-family="Liberation Sans" xml:space="preserve">251</text>
<text x="893.20" y="525.8" font-size="11.5" textLength="20.43" lengthAdjust="spacingAndGlyphs" fill="#000" font-weight="normal" font-family="Liberation Sans" xml:space="preserve">0.12</text>
<text x="963.20" y="525.8" font-size="11.5" textLength="5.84" lengthAdjust="spacingAndGlyphs" fill="#000" font-weight="normal" font-family="Liberation Sans" xml:space="preserve">0</text>
<text x="625.72" y="543.0" font-size="11.5" textLength="5.84" lengthAdjust="spacingAndGlyphs" fill="#000" font-weight="normal" font-family="Liberation Sans" transform="" >5</text>
<text x="640.20" y="543.8" font-size="11.5" textLength="22.17" lengthAdjust="spacingAndGlyphs" fill="#000" font-weight="normal" font-family="Liberation Sans" xml:space="preserve">Total</text>
<text x="738.20" y="543.8" font-size="11.5" textLength="17.51" lengthAdjust="spacingAndGlyphs" fill="#000" font-weight="normal" font-family="Liberation Sans" xml:space="preserve">579</text>
<text x="816.20" y="543.8" font-size="11.5" textLength="17.51" lengthAdjust="spacingAndGlyphs" fill="#000" font-weight="normal" font-family="Liberation Sans" xml:space="preserve">707</text>
<text x="893.20" y="543.8" font-size="11.5" textLength="20.43" lengthAdjust="spacingAndGlyphs" fill="#000" font-weight="normal" font-family="Liberation Sans" xml:space="preserve">0.35</text>
<text x="963.20" y="543.8" font-size="11.5" textLength="5.84" lengthAdjust="spacingAndGlyphs" fill="#000" font-weight="normal" font-family="Liberation Sans" xml:space="preserve">0</text>
<text x="625.72" y="561.0" font-size="11.5" textLength="5.84" lengthAdjust="spacingAndGlyphs" fill="#000" font-weight="normal" font-family="Liberation Sans" transform="" >6</text>
<text x="963.20" y="561.8" font-size="11.5" textLength="5.84" lengthAdjust="spacingAndGlyphs" fill="#000" font-weight="normal" font-family="Liberation Sans" xml:space="preserve">0</text>
<text x="625.72" y="579.0" font-size="11.5" textLength="5.84" lengthAdjust="spacingAndGlyphs" fill="#000" font-weight="normal" font-family="Liberation Sans" transform="" >7</text>
<text x="640.20" y="579.8" font-size="11.5" textLength="33.25" lengthAdjust="spacingAndGlyphs" fill="#000" font-weight="normal" font-family="Liberation Sans" xml:space="preserve">Default</text>
<text x="963.20" y="579.8" font-size="11.5" textLength="5.84" lengthAdjust="spacingAndGlyphs" fill="#000" font-weight="normal" font-family="Liberation Sans" xml:space="preserve">1</text>
<text x="625.72" y="597.0" font-size="11.5" textLength="5.84" lengthAdjust="spacingAndGlyphs" fill="#000" font-weight="normal" font-family="Liberation Sans" transform="" >8</text>
<text x="640.20" y="597.8" font-size="11.5" textLength="26.25" lengthAdjust="spacingAndGlyphs" fill="#000" font-weight="normal" font-family="Liberation Sans" xml:space="preserve">name</text>
<text x="738.20" y="597.8" font-size="11.5" textLength="36.76" lengthAdjust="spacingAndGlyphs" fill="#000" font-weight="normal" font-family="Liberation Sans" xml:space="preserve">account</text>
<text x="816.20" y="597.8" font-size="11.5" textLength="35.00" lengthAdjust="spacingAndGlyphs" fill="#000" font-weight="normal" font-family="Liberation Sans" xml:space="preserve">amount</text>
<text x="893.20" y="597.8" font-size="11.5" textLength="18.08" lengthAdjust="spacingAndGlyphs" fill="#000" font-weight="normal" font-family="Liberation Sans" xml:space="preserve">rate</text>
<text x="963.20" y="597.8" font-size="11.5" textLength="5.84" lengthAdjust="spacingAndGlyphs" fill="#000" font-weight="normal" font-family="Liberation Sans" xml:space="preserve">1</text>
<text x="625.72" y="615.0" font-size="11.5" textLength="5.84" lengthAdjust="spacingAndGlyphs" fill="#000" font-weight="normal" font-family="Liberation Sans" transform="" >9</text>
<text x="640.20" y="615.8" font-size="11.5" textLength="20.41" lengthAdjust="spacingAndGlyphs" fill="#000" font-weight="normal" font-family="Liberation Sans" xml:space="preserve">Alex</text>
<text x="738.20" y="615.8" font-size="11.5" textLength="17.51" lengthAdjust="spacingAndGlyphs" fill="#000" font-weight="normal" font-family="Liberation Sans" xml:space="preserve">123</text>
<text x="816.20" y="615.8" font-size="11.5" textLength="17.51" lengthAdjust="spacingAndGlyphs" fill="#000" font-weight="normal" font-family="Liberation Sans" xml:space="preserve">456</text>
<text x="893.20" y="615.8" font-size="11.5" textLength="20.43" lengthAdjust="spacingAndGlyphs" fill="#000" font-weight="normal" font-family="Liberation Sans" xml:space="preserve">0.23</text>
<text x="963.20" y="615.8" font-size="11.5" textLength="5.84" lengthAdjust="spacingAndGlyphs" fill="#000" font-weight="normal" font-family="Liberation Sans" xml:space="preserve">1</text>
<text x="619.89" y="633.0" font-size="11.5" textLength="11.67" lengthAdjust="spacingAndGlyphs" fill="#000" font-weight="normal" font-family="Liberation Sans" transform="" >10</text>
<text x="640.20" y="633.8" font-size="11.5" textLength="19.83" lengthAdjust="spacingAndGlyphs" fill="#000" font-weight="normal" font-family="Liberation Sans" xml:space="preserve">Tom</text>
<text x="738.20" y="633.8" font-size="11.5" textLength="11.67" lengthAdjust="spacingAndGlyphs" fill="#000" font-weight="normal" font-family="Liberation Sans" xml:space="preserve">45</text>
<text x="816.20" y="633.8" font-size="11.5" textLength="11.67" lengthAdjust="spacingAndGlyphs" fill="#000" font-weight="normal" font-family="Liberation Sans" xml:space="preserve">45</text>
<text x="893.20" y="633.8" font-size="11.5" textLength="20.43" lengthAdjust="spacingAndGlyphs" fill="#000" font-weight="normal" font-family="Liberation Sans" xml:space="preserve">0.68</text>
<text x="963.20" y="633.8" font-size="11.5" textLength="5.84" lengthAdjust="spacingAndGlyphs" fill="#000" font-weight="normal" font-family="Liberation Sans" xml:space="preserve">1</text>
<text x="620.67" y="651.0" font-size="11.5" textLength="10.89" lengthAdjust="spacingAndGlyphs" fill="#000" font-weight="normal" font-family="Liberation Sans" transform="" >11</text>
<text x="640.20" y="651.8" font-size="11.5" textLength="22.17" lengthAdjust="spacingAndGlyphs" fill="#000" font-weight="normal" font-family="Liberation Sans" xml:space="preserve">Total</text>
<text x="738.20" y="651.8" font-size="11.5" textLength="17.51" lengthAdjust="spacingAndGlyphs" fill="#000" font-weight="normal" font-family="Liberation Sans" xml:space="preserve">168</text>
<text x="816.20" y="651.8" font-size="11.5" textLength="17.51" lengthAdjust="spacingAndGlyphs" fill="#000" font-weight="normal" font-family="Liberation Sans" xml:space="preserve">501</text>
<text x="893.20" y="651.8" font-size="11.5" textLength="20.43" lengthAdjust="spacingAndGlyphs" fill="#000" font-weight="normal" font-family="Liberation Sans" xml:space="preserve">0.91</text>
<text x="963.20" y="651.8" font-size="11.5" textLength="5.84" lengthAdjust="spacingAndGlyphs" fill="#000" font-weight="normal" font-family="Liberation Sans" xml:space="preserve">1</text>
<text x="619.89" y="669.0" font-size="11.5" textLength="11.67" lengthAdjust="spacingAndGlyphs" fill="#000" font-weight="normal" font-family="Liberation Sans" transform="" >12</text>
<text x="963.20" y="669.8" font-size="11.5" textLength="5.84" lengthAdjust="spacingAndGlyphs" fill="#000" font-weight="normal" font-family="Liberation Sans" xml:space="preserve">0</text>
<text x="619.89" y="687.0" font-size="11.5" textLength="11.67" lengthAdjust="spacingAndGlyphs" fill="#000" font-weight="normal" font-family="Liberation Sans" transform="" >13</text>
<text x="963.20" y="687.8" font-size="11.5" textLength="5.84" lengthAdjust="spacingAndGlyphs" fill="#000" font-weight="normal" font-family="Liberation Sans" xml:space="preserve">0</text>
<text x="618.98" y="705.0" font-size="11.5" textLength="11.67" lengthAdjust="spacingAndGlyphs" fill="#000" font-weight="normal" font-family="Liberation Sans" transform="" >14</text>
<text x="963.20" y="705.8" font-size="11.5" textLength="5.84" lengthAdjust="spacingAndGlyphs" fill="#000" font-weight="normal" font-family="Liberation Sans" xml:space="preserve">0</text>
<text x="619.89" y="723.0" font-size="11.5" textLength="11.67" lengthAdjust="spacingAndGlyphs" fill="#000" font-weight="normal" font-family="Liberation Sans" transform="" >15</text>
<text x="640.20" y="723.8" font-size="11.5" textLength="54.85" lengthAdjust="spacingAndGlyphs" fill="#000" font-weight="normal" font-family="Liberation Sans" xml:space="preserve">Keep Sheet</text>
<text x="893.50" y="723.8" font-size="11.5" textLength="25.49" lengthAdjust="spacingAndGlyphs" fill="#a4a4c4" font-weight="normal" font-family="Liberation Sans" xml:space="preserve">[Null]</text>
<text x="963.20" y="723.8" font-size="11.5" textLength="5.84" lengthAdjust="spacingAndGlyphs" fill="#000" font-weight="normal" font-family="Liberation Sans" xml:space="preserve">0</text>
<text x="619.89" y="741.0" font-size="11.5" textLength="11.67" lengthAdjust="spacingAndGlyphs" fill="#000" font-weight="normal" font-family="Liberation Sans" transform="" >16</text>
<text x="640.20" y="741.8" font-size="11.5" textLength="26.25" lengthAdjust="spacingAndGlyphs" fill="#000" font-weight="normal" font-family="Liberation Sans" xml:space="preserve">name</text>
<text x="738.20" y="741.8" font-size="11.5" textLength="36.76" lengthAdjust="spacingAndGlyphs" fill="#000" font-weight="normal" font-family="Liberation Sans" xml:space="preserve">account</text>
<text x="816.20" y="741.8" font-size="11.5" textLength="35.00" lengthAdjust="spacingAndGlyphs" fill="#000" font-weight="normal" font-family="Liberation Sans" xml:space="preserve">amount</text>
<text x="893.20" y="741.8" font-size="11.5" textLength="18.08" lengthAdjust="spacingAndGlyphs" fill="#000" font-weight="normal" font-family="Liberation Sans" xml:space="preserve">rate</text>
<text x="963.20" y="741.8" font-size="11.5" textLength="5.84" lengthAdjust="spacingAndGlyphs" fill="#000" font-weight="normal" font-family="Liberation Sans" xml:space="preserve">0</text>
<text x="619.89" y="759.0" font-size="11.5" textLength="11.67" lengthAdjust="spacingAndGlyphs" fill="#000" font-weight="normal" font-family="Liberation Sans" transform="" >17</text>
<text x="640.20" y="759.8" font-size="11.5" textLength="20.41" lengthAdjust="spacingAndGlyphs" fill="#000" font-weight="normal" font-family="Liberation Sans" xml:space="preserve">Alex</text>
<text x="738.20" y="759.8" font-size="11.5" textLength="17.51" lengthAdjust="spacingAndGlyphs" fill="#000" font-weight="normal" font-family="Liberation Sans" xml:space="preserve">123</text>
<text x="816.20" y="759.8" font-size="11.5" textLength="11.67" lengthAdjust="spacingAndGlyphs" fill="#000" font-weight="normal" font-family="Liberation Sans" xml:space="preserve">12</text>
<text x="893.20" y="759.8" font-size="11.5" textLength="20.43" lengthAdjust="spacingAndGlyphs" fill="#000" font-weight="normal" font-family="Liberation Sans" xml:space="preserve">0.25</text>
<text x="963.20" y="759.8" font-size="11.5" textLength="5.84" lengthAdjust="spacingAndGlyphs" fill="#000" font-weight="normal" font-family="Liberation Sans" xml:space="preserve">0</text>
<text x="619.89" y="777.0" font-size="11.5" textLength="11.67" lengthAdjust="spacingAndGlyphs" fill="#000" font-weight="normal" font-family="Liberation Sans" transform="" >18</text>
<text x="640.20" y="777.8" font-size="11.5" textLength="28.58" lengthAdjust="spacingAndGlyphs" fill="#000" font-weight="normal" font-family="Liberation Sans" xml:space="preserve">Grace</text>
<text x="738.20" y="777.8" font-size="11.5" textLength="17.51" lengthAdjust="spacingAndGlyphs" fill="#000" font-weight="normal" font-family="Liberation Sans" xml:space="preserve">456</text>
<text x="816.20" y="777.8" font-size="11.5" textLength="17.51" lengthAdjust="spacingAndGlyphs" fill="#000" font-weight="normal" font-family="Liberation Sans" xml:space="preserve">251</text>
<text x="893.20" y="777.8" font-size="11.5" textLength="20.43" lengthAdjust="spacingAndGlyphs" fill="#000" font-weight="normal" font-family="Liberation Sans" xml:space="preserve">0.12</text>
<text x="963.20" y="777.8" font-size="11.5" textLength="5.84" lengthAdjust="spacingAndGlyphs" fill="#000" font-weight="normal" font-family="Liberation Sans" xml:space="preserve">0</text>
<text x="619.89" y="795.0" font-size="11.5" textLength="11.67" lengthAdjust="spacingAndGlyphs" fill="#000" font-weight="normal" font-family="Liberation Sans" transform="" >19</text>
<text x="640.20" y="795.8" font-size="11.5" textLength="22.17" lengthAdjust="spacingAndGlyphs" fill="#000" font-weight="normal" font-family="Liberation Sans" xml:space="preserve">Total</text>
<text x="738.20" y="795.8" font-size="11.5" textLength="17.51" lengthAdjust="spacingAndGlyphs" fill="#000" font-weight="normal" font-family="Liberation Sans" xml:space="preserve">579</text>
<text x="816.20" y="795.8" font-size="11.5" textLength="17.51" lengthAdjust="spacingAndGlyphs" fill="#000" font-weight="normal" font-family="Liberation Sans" xml:space="preserve">263</text>
<text x="893.20" y="795.8" font-size="11.5" textLength="20.43" lengthAdjust="spacingAndGlyphs" fill="#000" font-weight="normal" font-family="Liberation Sans" xml:space="preserve">0.37</text>
<text x="963.20" y="795.8" font-size="11.5" textLength="5.84" lengthAdjust="spacingAndGlyphs" fill="#000" font-weight="normal" font-family="Liberation Sans" xml:space="preserve">0</text></svg>
</body></html>
